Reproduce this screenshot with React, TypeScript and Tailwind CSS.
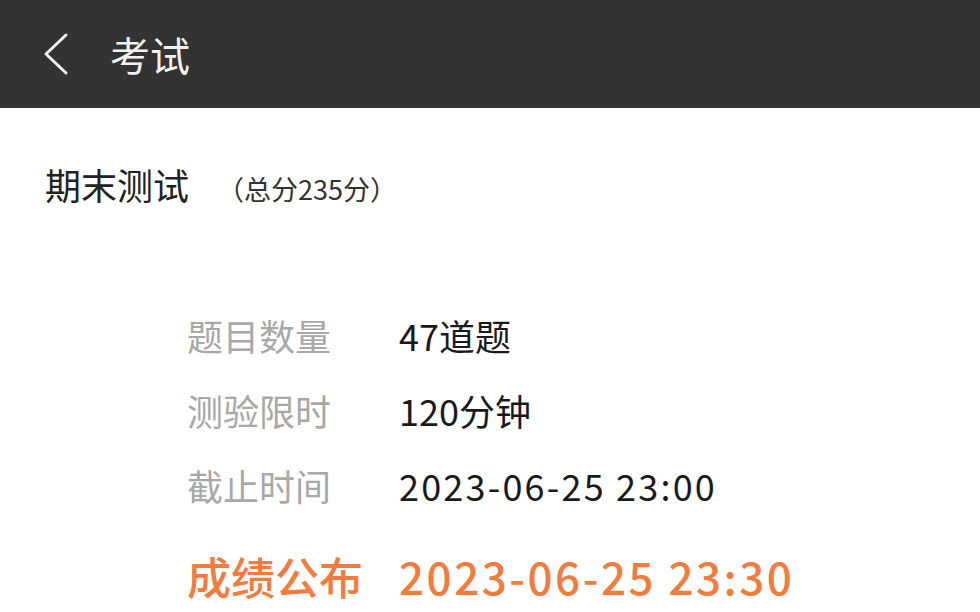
export default function App() {
  const rows = [
    { label: "题目数量", value: "47道题", date: false },
    { label: "测验限时", value: "120分钟", date: false },
    { label: "截止时间", value: "2023-06-25 23:00", date: true },
  ];
  const font = { fontFamily: '"Noto Sans CJK SC", "Noto Sans", sans-serif' };

  return (
    <div className="w-[980px] h-[612px] overflow-hidden bg-white" style={font}>
      <div className="h-[108px] bg-[#333333] flex items-center">
        <svg width="28" height="44" viewBox="0 0 28 44" className="ml-[41px]" fill="none">
          <path d="M25 3 L5 22 L25 41" stroke="#f2f2f2" strokeWidth="3" strokeLinecap="round" strokeLinejoin="round" />
        </svg>
        <span className="ml-[41px] text-[40px] text-[#f2f2f2] leading-none">考试</span>
      </div>

      <div className="flex items-baseline pl-[45px] pt-[58px]">
        <span className="text-[36px] text-[#222] leading-none">期末测试</span>
        <span className="ml-[28px] text-[27px] text-[#333] leading-none">（总分235分）</span>
      </div>

      <div className="pl-[187px] pt-[95px] flex flex-col">
        {rows.map((r) => (
          <div key={r.label} className="flex items-center h-[75px]">
            <span className="w-[212px] text-[36px] text-[#a8a8a8] leading-none">{r.label}</span>
            <span className={r.date ? "text-[36px] text-[#1a1a1a] leading-none tracking-[2.2px]" : "text-[36px] text-[#1a1a1a] leading-none"}>
              {r.value}
            </span>
          </div>
        ))}
        <div className="flex items-center h-[108px] font-medium text-[#f27b3d]">
          <span className="w-[212px] text-[44px] leading-none">成绩公布</span>
          <span className="text-[44px] leading-none tracking-[2.5px]">2023-06-25 23:30</span>
        </div>
      </div>
    </div>
  );
}
